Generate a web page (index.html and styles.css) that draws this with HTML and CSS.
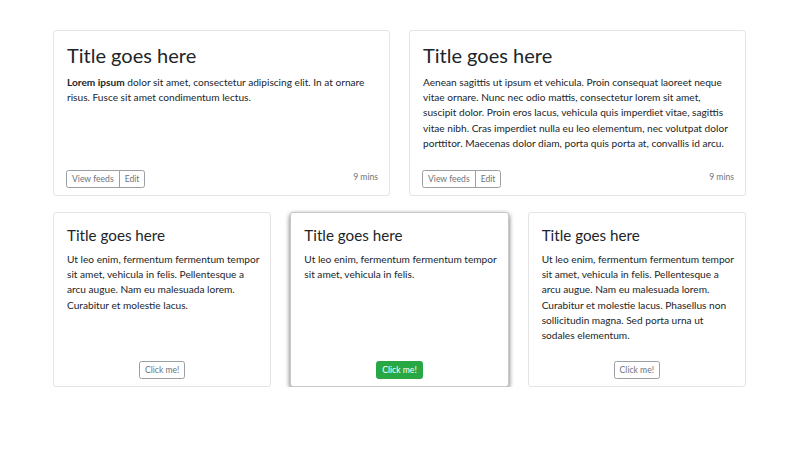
FILE: index.html
```html
<!DOCTYPE html>
<html>
<head>
<meta charset="utf-8">
<link rel="stylesheet" href="styles.css">
</head>
<body>
<div class="container">
  <div class="row row-top">
    <div class="card card-wide">
      <div class="card-body">
        <h2 class="title-lg">Title goes here</h2>
        <p class="text"><strong>Lorem ipsum</strong> dolor sit amet, consectetur adipiscing elit. In at ornare risus. Fusce sit amet condimentum lectus.</p>
      </div>
      <div class="card-foot">
        <div class="btn-group">
          <span class="btn btn-outline">View feeds</span><span class="btn btn-outline">Edit</span>
        </div>
        <span class="time">9 mins</span>
      </div>
    </div>
    <div class="card card-wide">
      <div class="card-body">
        <h2 class="title-lg">Title goes here</h2>
        <p class="text">Aenean sagittis ut ipsum et vehicula. Proin consequat laoreet neque vitae ornare. Nunc nec odio mattis, consectetur lorem sit amet, suscipit dolor. Proin eros lacus, vehicula quis imperdiet vitae, sagittis vitae nibh. Cras imperdiet nulla eu leo elementum, nec volutpat dolor porttitor. Maecenas dolor diam, porta quis porta at, convallis id arcu.</p>
      </div>
      <div class="card-foot">
        <div class="btn-group">
          <span class="btn btn-outline">View feeds</span><span class="btn btn-outline">Edit</span>
        </div>
        <span class="time">9 mins</span>
      </div>
    </div>
  </div>
  <div class="row row-bottom">
    <div class="card card-small">
      <div class="card-body">
        <h3 class="title-sm">Title goes here</h3>
        <p class="text">Ut leo enim, fermentum fermentum tempor sit amet, vehicula in felis. Pellentesque a arcu augue. Nam eu malesuada lorem. Curabitur et molestie lacus.</p>
      </div>
      <div class="card-foot center">
        <span class="btn btn-single">Click me!</span>
      </div>
    </div>
    <div class="card card-small raised">
      <div class="card-body">
        <h3 class="title-sm">Title goes here</h3>
        <p class="text">Ut leo enim, fermentum fermentum tempor sit amet, vehicula in felis.</p>
      </div>
      <div class="card-foot center">
        <span class="btn btn-success">Click me!</span>
      </div>
    </div>
    <div class="card card-small">
      <div class="card-body">
        <h3 class="title-sm">Title goes here</h3>
        <p class="text">Ut leo enim, fermentum fermentum tempor sit amet, vehicula in felis. Pellentesque a arcu augue. Nam eu malesuada lorem. Curabitur et molestie lacus. Phasellus non sollicitudin magna. Sed porta urna ut sodales elementum.</p>
      </div>
      <div class="card-foot center">
        <span class="btn btn-single">Click me!</span>
      </div>
    </div>
  </div>
</div>
</body>
</html>
```
FILE: styles.css
```css
* { box-sizing: border-box; }
html, body { margin: 0; padding: 0; background: #fff; }
body {
  font-family: Lato, "Noto Sans", sans-serif;
  color: #212529;
}
.container {
  width: 693px;
  margin: 30px 0 0 53px;
  display: flex;
  flex-direction: column;
  gap: 16px;
}
.row {
  display: flex;
  gap: 19px;
}
.row-top { height: 166px; }
.row-bottom { height: 175px; }
.card {
  flex: 1 1 0;
  display: flex;
  flex-direction: column;
  border: 1px solid #e4e4e4;
  border-radius: 3px;
  background: #fff;
  padding: 12px 13px 7px 13px;
}
.raised {
  border-color: #c8c8c8;
  box-shadow: 0 2px 5px rgba(0,0,0,0.6);
}
.card-body { flex: 1 1 auto; }
.title-lg {
  margin: 0 0 7px 0;
  font-weight: 400;
  font-size: 20px;
  line-height: 25px;
  color: #212529;
}
.title-sm {
  margin: 0 0 7px 0;
  font-weight: 400;
  font-size: 15.2px;
  line-height: 20px;
  color: #212529;
}
.card-small { padding-top: 12px; padding-right: 10px; }
.card-small .card-foot { margin-right: 3px; }
.text {
  margin: 0;
  font-size: 10.15px;
  line-height: 15.2px;
  color: #212529;
}
.text strong { font-weight: 700; }
.card-foot {
  display: flex;
  justify-content: space-between;
  align-items: flex-start;
}
.card-foot.center { justify-content: center; }
.btn-group { display: flex; margin-left: -1px; }
.btn {
  display: inline-block;
  font-size: 8.6px;
  line-height: 16px;
  height: 18px;
  padding: 0 5px;
  border: 1px solid #9a9fa4;
  color: #6c757d;
  border-radius: 2.5px;
  background: #fff;
}
.btn-group .btn:first-child { border-top-right-radius: 0; border-bottom-right-radius: 0; }
.btn-group .btn:last-child { border-top-left-radius: 0; border-bottom-left-radius: 0; margin-left: -1px; }
.btn-single { padding: 0 5px; }
.btn-success {
  background: #28a745;
  border-color: #28a745;
  color: #fff;
  padding: 0 5px;
}
.time {
  font-size: 8.6px;
  line-height: 12px;
  color: #6c757d;
  margin-top: 1px;
  margin-right: -2px;
}
```
